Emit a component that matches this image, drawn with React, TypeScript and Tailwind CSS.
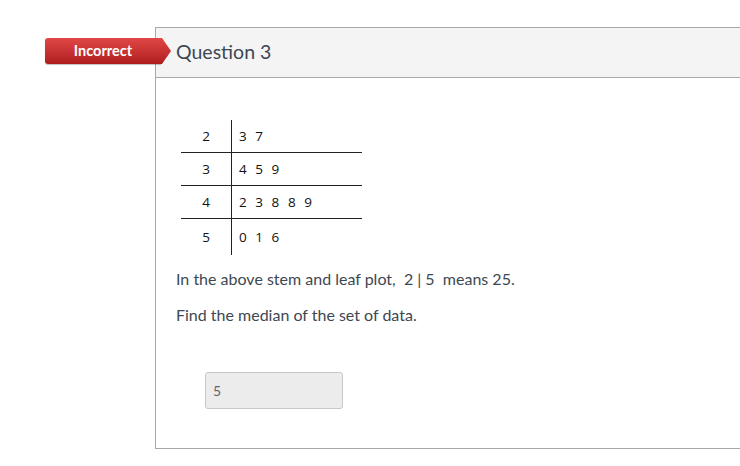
import * as React from "react"

const rows = [
  { stem: "2", leaves: ["3", "7"] },
  { stem: "3", leaves: ["4", "5", "9"] },
  { stem: "4", leaves: ["2", "3", "8", "8", "9"] },
  { stem: "5", leaves: ["0", "1", "6"] },
]

function StemLeafPlot() {
  return (
    <div className="w-[181px] font-['Open_Sans',sans-serif] text-[13.5px] text-[#111]">
      {rows.map((row, i) => (
        <div
          key={row.stem}
          className={
            "flex items-center " +
            (i < rows.length - 1 ? "h-[33px] border-b border-[#222]" : "h-[36px]")
          }
        >
          <div className="w-[50px] pr-[21px] text-right">{row.stem}</div>
          <div className="flex h-full items-center border-l border-[#222] pl-[7px]">
            {row.leaves.map((leaf, j) => (
              <span key={j} className="w-[16.3px]">
                {leaf}
              </span>
            ))}
          </div>
        </div>
      ))}
    </div>
  )
}

function IncorrectBadge() {
  return (
    <div className="absolute left-[-111px] top-[10px] flex h-[26px] items-center">
      <div className="flex h-[26px] w-[116px] items-center justify-center rounded-l-[3px] bg-gradient-to-b from-[#e24747] to-[#ae1d1d] text-[14.5px] font-bold text-white shadow-[0_1px_1px_rgba(0,0,0,0.25)]">
        <span className="-mt-[1px]">Incorrect</span>
      </div>
      <svg width="10" height="26" viewBox="0 0 10 26" className="block">
        <defs>
          <linearGradient id="bg" x1="0" y1="0" x2="0" y2="1">
            <stop offset="0" stopColor="#e24747" />
            <stop offset="1" stopColor="#ae1d1d" />
          </linearGradient>
        </defs>
        <polygon points="0,0 1,0 10,13 1,26 0,26" fill="url(#bg)" />
      </svg>
    </div>
  )
}

export default function App() {
  return (
    <div className="h-[466px] w-[740px] overflow-hidden bg-white pt-[27px] font-['Lato',sans-serif]">
      <div className="relative ml-[155px] w-[620px] border border-[#a8a8a8]">
        <IncorrectBadge />
        <div className="flex h-[50px] items-center border-b border-[#a8a8a8] bg-[#f4f4f4] pl-[20px] pb-[1px]">
          <h2 className="text-[19.5px] font-normal text-[#3d4852]">Question 3</h2>
        </div>
        <div className="pl-[20px] pt-[42px] pb-[39px] text-[16px] text-[#3d4852]">
          <div className="pl-[5px]">
            <StemLeafPlot />
          </div>
          <p className="mt-[14px] leading-[20px]">
            In the above stem and leaf plot,&nbsp; 2 | 5&nbsp; means 25.
          </p>
          <p className="mt-[16px] leading-[20px]">Find the median of the set of data.</p>
          <div className="ml-[29px] mt-[47px] flex h-[37px] w-[138px] items-center rounded-[3px] border border-[#c8c8c8] bg-[#ececec] pl-[7px] text-[14px] text-[#666]">
            5
          </div>
        </div>
      </div>
    </div>
  )
}
